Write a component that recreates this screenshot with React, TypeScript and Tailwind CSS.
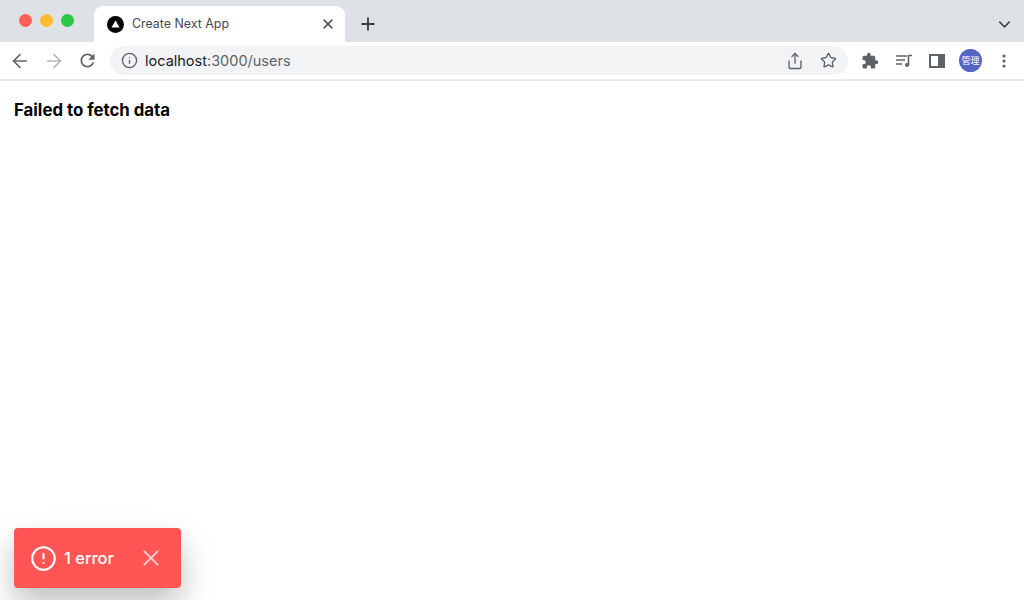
import { ArrowLeft, ArrowRight, Info, Share, Star, X, Plus, ChevronDown, CircleAlert } from "lucide-react";

export default function App() {
  return (
    <div className="relative h-[600px] w-[1024px] overflow-hidden bg-white font-['Inter',sans-serif]">
      {/* Tab strip */}
      <div className="flex h-[42px] bg-[#dee1e6]">
        <div className="flex w-[94px] items-start gap-[8px] pl-[19px] pt-[14px]">
          <span className="h-[13px] w-[13px] rounded-full bg-[#ff5f57]" />
          <span className="h-[13px] w-[13px] rounded-full bg-[#febc2e]" />
          <span className="h-[13px] w-[13px] rounded-full bg-[#28c840]" />
        </div>
        <div className="mt-[6px] flex h-[36px] w-[251px] items-center rounded-t-[9px] bg-white pl-[13px] pr-[9px]">
          <span className="flex h-[17px] w-[17px] items-center justify-center rounded-full bg-black">
            <svg width="9" height="8" viewBox="0 0 9 8"><path d="M4.5 0.5 8.5 7.5H0.5Z" fill="#fff" /></svg>
          </span>
          <span className="ml-[8px] flex-1 text-[12.4px] text-[#45494e]">Create Next App</span>
          <X size={16} strokeWidth={2.2} className="text-[#3c4043]" />
        </div>
        <div className="ml-[13px] mt-[6px] flex h-[36px] items-center">
          <Plus size={20} strokeWidth={2.2} className="text-[#3c4043]" />
        </div>
        <div className="ml-auto mt-[6px] flex h-[36px] items-center pr-[10px]">
          <ChevronDown size={19} strokeWidth={2.1} className="text-[#45494e]" />
        </div>
      </div>

      {/* Toolbar */}
      <div className="flex h-[39px] items-center border-b-2 border-[#e9eaec] bg-white">
        <div className="flex w-[110px] items-center gap-[12px] pl-[9px]">
          <ArrowLeft size={22} strokeWidth={1.8} className="text-[#5f6368]" />
          <ArrowRight size={22} strokeWidth={1.8} className="text-[#b4b6b9]" />
          <svg width="21" height="21" viewBox="0 0 24 24" fill="#5f6368">
            <path d="M17.65 6.35C16.2 4.9 14.21 4 12 4c-4.42 0-7.99 3.58-7.99 8s3.57 8 7.99 8c3.73 0 6.84-2.55 7.73-6h-2.08c-.82 2.33-3.04 4-5.65 4-3.31 0-6-2.69-6-6s2.69-6 6-6c1.66 0 3.14.69 4.22 1.78L13 11h7V4l-2.35 2.35z" />
          </svg>
        </div>
        <div className="flex h-[29px] w-[738px] items-center rounded-full bg-[#f1f3f4] px-[11px]">
          <Info size={17} strokeWidth={1.9} className="text-[#5f6368]" />
          <span className="ml-[7px] flex-1 text-[14.5px] text-[#202124]">
            localhost<span className="text-[#5f6368]">:3000/users</span>
          </span>
          <Share size={18} strokeWidth={1.8} className="mr-[16px] text-[#5f6368]" />
          <Star size={17} strokeWidth={1.9} className="text-[#5f6368]" />
        </div>
        <div className="flex flex-1 items-center pl-[13px]">
          <svg width="18" height="18" viewBox="0 0 24 24" fill="#5f6368">
            <path d="M20.5 11H19V7c0-1.1-.9-2-2-2h-4V3.5C13 2.12 11.88 1 10.5 1S8 2.12 8 3.5V5H4c-1.1 0-1.99.9-1.99 2v3.8H3.5c1.49 0 2.7 1.21 2.7 2.7s-1.21 2.7-2.7 2.7H2V20c0 1.1.9 2 2 2h3.8v-1.5c0-1.49 1.21-2.7 2.7-2.7 1.49 0 2.7 1.21 2.7 2.7V22H17c1.1 0 2-.9 2-2v-4h1.5c1.38 0 2.5-1.12 2.5-2.5S21.88 11 20.5 11z" />
          </svg>
          <svg className="ml-[16px]" width="18" height="16" viewBox="0 0 18 16" fill="none" stroke="#5f6368" strokeWidth="1.6">
            <path d="M1 3H12M1 7H10M1 11H7" />
            <path d="M13.5 12V2.5H17" />
            <circle cx="12" cy="12" r="2" fill="#5f6368" stroke="none" />
          </svg>
          <svg className="ml-[16px]" width="16" height="14" viewBox="0 0 16 14">
            <rect x="1" y="1" width="14" height="12" fill="none" stroke="#5f6368" strokeWidth="2" />
            <rect x="9" y="1" width="6" height="12" fill="#5f6368" />
          </svg>
          <span className="ml-[14px] flex h-[23px] w-[23px] items-center justify-center rounded-full bg-[#5565c4] font-['Noto_Sans_CJK_JP',sans-serif] text-[9px] text-white">
            管理
          </span>
          <svg className="ml-[20px]" width="4" height="14" viewBox="0 0 4 14" fill="#5f6368">
            <circle cx="2" cy="2" r="1.6" />
            <circle cx="2" cy="7" r="1.6" />
            <circle cx="2" cy="12" r="1.6" />
          </svg>
        </div>
      </div>

      {/* Page */}
      <div className="px-[14px] pt-[19px]">
        <p className="text-[16.8px] font-bold leading-[20px] text-black">Failed to fetch data</p>
      </div>

      {/* Next dev toast */}
      <div className="absolute bottom-[12px] left-[14px] flex h-[60px] w-[167px] items-center rounded-[4px] bg-[#ff5555] pl-[16px] text-white shadow-[0_16px_32px_rgba(0,0,0,0.25)]">
        <CircleAlert size={27} strokeWidth={1.9} />
        <span className="ml-[7px] text-[16.5px] font-medium">1 error</span>
        <X size={26} strokeWidth={1.9} className="ml-[24px] text-[#ffc4c4]" />
      </div>
    </div>
  );
}
